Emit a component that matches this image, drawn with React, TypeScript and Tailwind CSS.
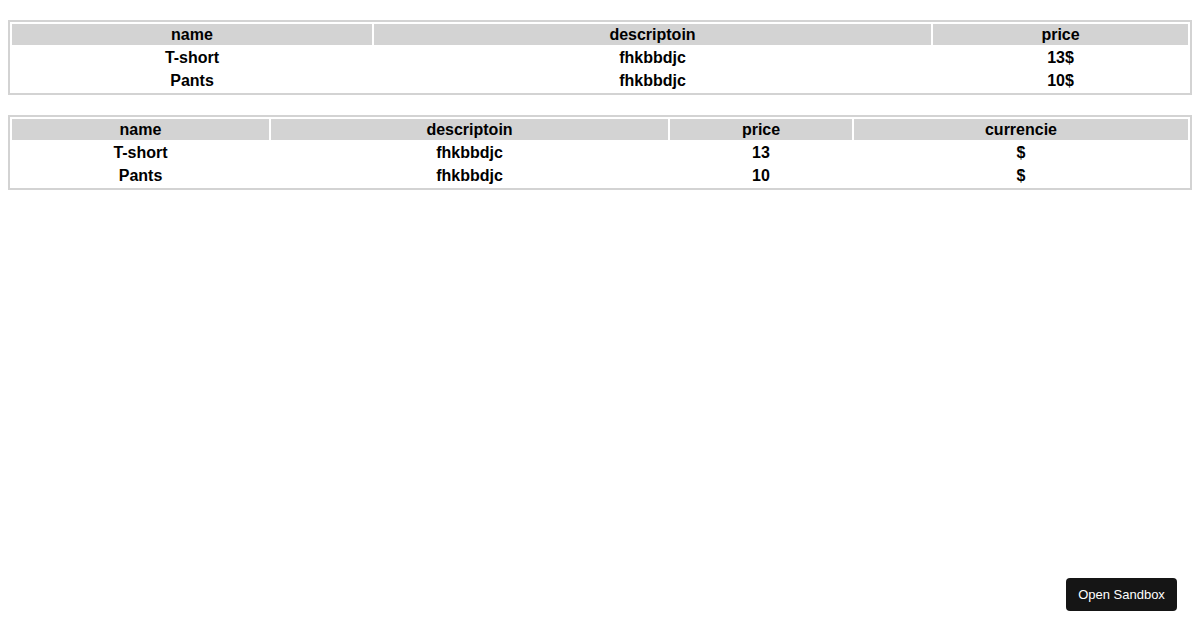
import React from 'react';

interface Product {
  name: string;
  description: string;
  price: number;
  currency: string;
}

const products: Product[] = [
  { name: 'T-short', description: 'fhkbbdjc', price: 13, currency: '$' },
  { name: 'Pants', description: 'fhkbbdjc', price: 10, currency: '$' },
];

const th = 'bg-[#d3d3d3] px-px py-px leading-[19px] font-bold text-center';
const td = 'px-px py-px leading-[19px] font-bold text-center';

const App: React.FC = () => {
  return (
    <div className="min-h-[630px] bg-white text-black px-2 pt-5 text-base" style={{ fontFamily: '"Liberation Sans", Arial, sans-serif' }}>
      <table className="w-full table-fixed border-separate border-spacing-[2px] border-2 border-[#d3d3d3]">
        <thead>
          <tr>
            <th className={`${th} w-[360px]`}>name</th>
            <th className={`${th} w-[557px]`}>descriptoin</th>
            <th className={th}>price</th>
          </tr>
        </thead>
        <tbody>
          {products.map((p) => (
            <tr key={p.name}>
              <td className={td}>{p.name}</td>
              <td className={td}>{p.description}</td>
              <td className={td}>{p.price}{p.currency}</td>
            </tr>
          ))}
        </tbody>
      </table>

      <table className="mt-5 w-full table-fixed border-separate border-spacing-[2px] border-2 border-[#d3d3d3]">
        <thead>
          <tr>
            <th className={`${th} w-[257px]`}>name</th>
            <th className={`${th} w-[397px]`}>descriptoin</th>
            <th className={`${th} w-[182px]`}>price</th>
            <th className={th}>currencie</th>
          </tr>
        </thead>
        <tbody>
          {products.map((p) => (
            <tr key={p.name}>
              <td className={td}>{p.name}</td>
              <td className={td}>{p.description}</td>
              <td className={td}>{p.price}</td>
              <td className={td}>{p.currency}</td>
            </tr>
          ))}
        </tbody>
      </table>

      <button className="fixed right-[23px] bottom-[19px] h-[33px] w-[111px] rounded-[4px] bg-[#151515] text-[13px] text-white">
        Open Sandbox
      </button>
    </div>
  );
};

export default App;
